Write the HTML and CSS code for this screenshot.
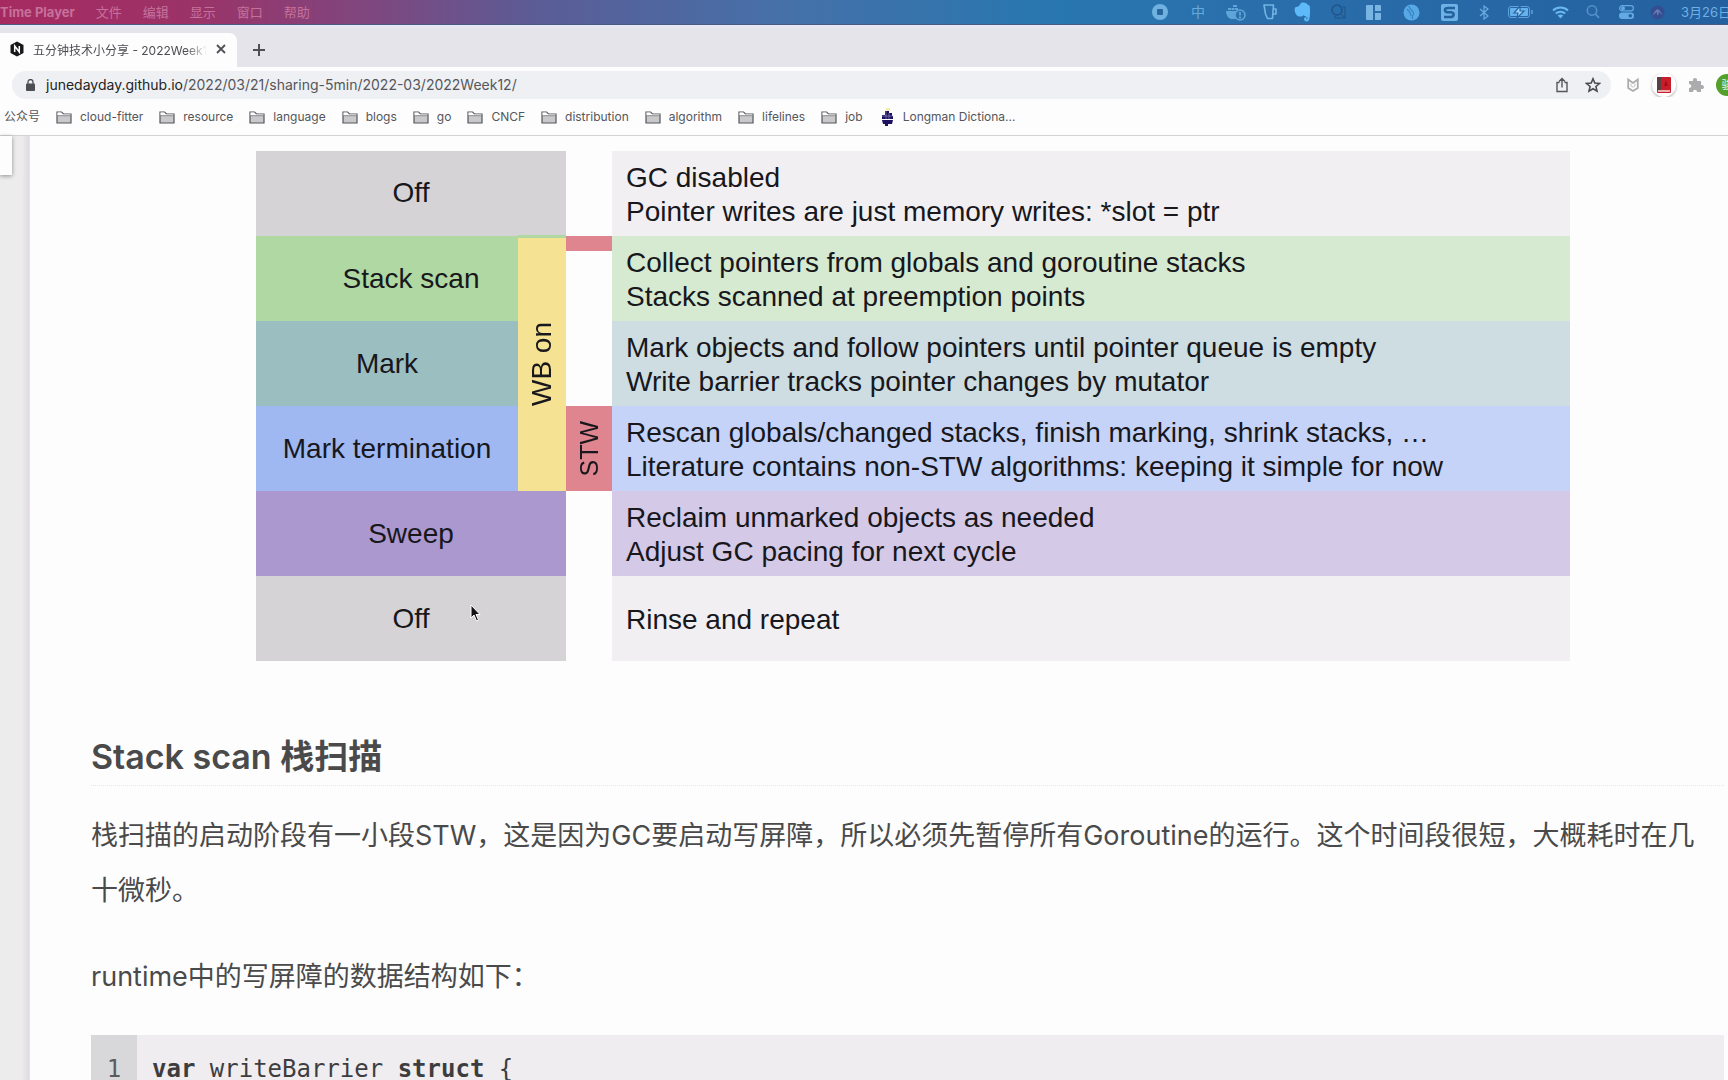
FILE: index.html
```html
<!DOCTYPE html>
<html lang="zh-CN">
<head>
<meta charset="utf-8">
<title>五分钟技术小分享 - 2022Week12</title>
<link rel="stylesheet" href="styles.css">
</head>
<body>
<svg class="defs" aria-hidden="true">
  <symbol id="folder" viewBox="0 0 16 14"><path d="M1 12.5V1.5H5.5L7.5 3.5H15V12.5Z" fill="#c9c9cb" stroke="#55565a" stroke-width="1.2"/><path d="M1.5 2H5.2L7 4H14.5V5H1.5Z" fill="#fff"/><path d="M1 5.2H15" stroke="#77787c" stroke-width=".8"/></symbol>
</svg>

<header class="menubar">
  <nav class="menus">
    <b>Time Player</b><span>文件</span><span>编辑</span><span>显示</span><span>窗口</span><span>帮助</span>
  </nav>
  <div class="status">
    <svg width="16" height="16" viewBox="0 0 16 16"><circle cx="8" cy="8" r="8" fill="#6fb2e0"/><rect x="5" y="5" width="6" height="6" rx="1" fill="#28659c"/></svg>
    <span class="ime">中</span>
    <svg width="20" height="18" viewBox="0 0 20 18"><path d="M0 8h11a6 6 0 0 0-1 8H5C2 15 0 12 0 8ZM2 5h3v2H2ZM5.500 5h3v2h-3ZM9 5h3v2H9ZM7 2h4v2H7Z" fill="#5fa5d8"/><circle cx="14" cy="12" r="5" fill="#2b70ab" stroke="#5fa5d8" stroke-width="1.500"/><path d="M14 9v3.500M13 14.500h2" stroke="#5fa5d8" stroke-width="1.800"/></svg>
    <svg width="16" height="18" viewBox="0 0 16 18"><path d="M2 2h9.500l-1 13.500H5.500L3.500 11ZM11 6h3v5h-3.500" fill="none" stroke="#72b5e4" stroke-width="1.600" stroke-linejoin="round"/></svg>
    <svg width="18" height="21" viewBox="0 0 18 21"><path d="M5 4 7 1c3-1 6 0 7 2 2 0 2 2 2 5 0 4 0 7-1 10-.6 2-5 2-5-1 0-2 3-2.500 3-1l-1 1c1 1 1.500 0 1.500-1 0-2-3-1-4-3-1 2-5 2-7 0C1 11 0 8 1 5.500Z" fill="#5db9f8"/></svg>
    <svg width="16" height="16" viewBox="0 0 16 16"><circle cx="7" cy="6" r="5" fill="none" stroke="#215487" stroke-width="1.500"/><path d="M11 10l4 4M13 3h2v11H5v-2" fill="none" stroke="#215487"/></svg>
    <svg width="15" height="15" viewBox="0 0 15 15"><path d="M0 1q0-1 1-1h6v15H1q-1 0-1-1ZM9 0h5q1 0 1 1v5H9ZM9 8h6v6q0 1-1 1H9Z" fill="#78b5e2"/></svg>
    <svg width="17" height="17" viewBox="0 0 17 17"><circle cx="8.500" cy="8.500" r="8" fill="#57a9e6"/><path d="M6 2c0 4 5 4 4.500 8-.5 2-2 2-1 5M4 5c2 2 4 4 4 7" fill="none" stroke="#3a82c2" stroke-width="1.200"/></svg>
    <svg width="17" height="17" viewBox="0 0 17 17"><rect width="17" height="17" rx="2" fill="#6db2e4"/><path d="M14 4H7C3 4 3 8.200 6.500 8.200H10C14 8.500 13 13 9.500 13H3" fill="none" stroke="#25619e" stroke-width="2.600"/></svg>
    <svg width="10" height="15" viewBox="0 0 10 15"><path d="M1 4l8 7-4 3V1l4 3-8 7" fill="none" stroke="#69ace0" stroke-width="1.200"/></svg>
    <svg width="25" height="12" viewBox="0 0 25 12"><rect x=".5" y=".5" width="21" height="11" rx="2.500" fill="none" stroke="#5ba2da"/><rect x="2" y="2" width="18" height="8" rx="1" fill="#65b1ec"/><path d="M12 0 6 7h4l-1 5 7-7h-4Z" fill="#9bd5ff" stroke="#2763a0" stroke-width="1.200"/><path d="M24 4v4" stroke="#5ba2da" stroke-width="1.500"/></svg>
    <svg width="17" height="13" viewBox="0 0 17 13"><path d="M1 4.500a11 11 0 0 1 15 0M3.800 7.500a7 7 0 0 1 9.400 0" fill="none" stroke="#69b8f2" stroke-width="2"/><path d="M5.700 9.500q2.800-2 5.600 0L8.500 12.500Z" fill="#69b8f2"/></svg>
    <svg width="14" height="14" viewBox="0 0 14 14"><circle cx="6" cy="5.500" r="4.700" fill="none" stroke="#5593c9" stroke-width="1.500"/><path d="M9.500 9l3.500 3.800" stroke="#5593c9" stroke-width="1.800"/></svg>
    <svg width="15" height="14" viewBox="0 0 15 14"><rect x=".6" y=".6" width="13.800" height="5.200" rx="2.600" fill="none" stroke="#63aae5" stroke-width="1.200"/><circle cx="4" cy="3.200" r="2" fill="#63aae5"/><rect y="7.500" width="15" height="6.500" rx="3.200" fill="#63aae5"/><circle cx="11.300" cy="10.800" r="1.800" fill="#2562a0"/></svg>
    <svg width="15" height="15" viewBox="0 0 15 15"><circle cx="7.500" cy="7.500" r="7" fill="#334f91"/><path d="M2 10.500l3.500-5 2-1.500 2 1.500 3.500 5-3-2.500-1.500-1v3h-1.500V7L5 8.500Z" fill="#6d79b0"/></svg>
  </div>
  <time class="date">3月26日</time>
</header>

<div class="tabstrip">
  <div class="tab">
    <svg width="14" height="16" viewBox="0 0 14 16"><path d="M7 .5 13.500 4v8L7 15.500.5 12V4Z" fill="#17181a"/><path d="M4.700 11V5l4.600 6V5" fill="none" stroke="#fff" stroke-width="1.500"/></svg>
    <span class="tab-title">五分钟技术小分享 - 2022Week12</span>
    <button class="plain" aria-label="关闭标签页"><svg width="10" height="10" viewBox="0 0 10 10"><path d="M1 1l8 8M9 1L1 9" stroke="#4f5054" stroke-width="1.800"/></svg></button>
  </div>
  <button class="plain newtab" aria-label="新标签页"><svg width="12" height="12" viewBox="0 0 12 12"><path d="M6 0v12M0 6h12" stroke="#4f5054" stroke-width="2"/></svg></button>
</div>

<div class="toolbar">
  <div class="omnibox">
    <svg width="9" height="12" viewBox="0 0 9 12"><rect y="4.500" width="9" height="7.500" rx="1" fill="#4d4e53"/><path d="M2 5V3a2.500 2.500 0 0 1 5 0v2" fill="none" stroke="#4d4e53" stroke-width="1.300"/></svg>
    <a class="url" href="#"><span>junedayday.github.io</span>/2022/03/21/sharing-5min/2022-03/2022Week12/</a>
    <button class="plain" aria-label="分享"><svg width="14" height="16" viewBox="0 0 14 16"><path d="M4.500 5.500H2v9h10v-9H9.500M7 10.500V2M4 4.500l3-3 3 3" fill="none" stroke="#55565b" stroke-width="1.400"/></svg></button>
    <button class="plain" aria-label="收藏"><svg width="16" height="16" viewBox="0 0 16 16"><path d="M8 1.800l1.800 4.300 4.700.4-3.600 3 1.100 4.600L8 11.700l-4 2.400 1.100-4.600-3.600-3 4.700-.4Z" fill="none" stroke="#4a4b50" stroke-width="1.600"/></svg></button>
  </div>
  <div class="extensions">
    <svg width="14" height="16" viewBox="0 0 14 16"><path d="M2.200 11V2.500L7 6l4.800-3.500V11L7 14Z" fill="none" stroke="#acacaf" stroke-width="1.800"/><path d="M5 6.500V9l2 1.200L9 9V6.500" fill="none" stroke="#c6c6c8"/></svg>
    <span class="ext-circle"><svg width="14" height="16" viewBox="0 0 14 16"><rect width="14" height="16" rx="1" fill="#c91d29"/><path d="M0 0h4v13H0Z" fill="#5b4146"/><path d="M1 14h12" stroke="#fff" stroke-width="1.300"/><path d="M7 9l2-6 2 6" fill="#a60e1d"/></svg></span>
    <svg width="16" height="16" viewBox="0 0 16 16"><path d="M1 4h4c-1-4 5-4 4 0h4v4c4-1 4 5 0 4v3H9c0-3-4-3-4 0H1v-4c3 0 3-4 0-4Z" fill="#acacaf"/></svg>
    <span class="avatar">骏</span>
  </div>
</div>

<nav class="bookmarks">
  <a href="#">公众号</a>
  <a href="#"><svg><use href="#folder"/></svg>cloud-fitter</a>
  <a href="#"><svg><use href="#folder"/></svg>resource</a>
  <a href="#"><svg><use href="#folder"/></svg>language</a>
  <a href="#"><svg><use href="#folder"/></svg>blogs</a>
  <a href="#"><svg><use href="#folder"/></svg>go</a>
  <a href="#"><svg><use href="#folder"/></svg>CNCF</a>
  <a href="#"><svg><use href="#folder"/></svg>distribution</a>
  <a href="#"><svg><use href="#folder"/></svg>algorithm</a>
  <a href="#"><svg><use href="#folder"/></svg>lifelines</a>
  <a href="#"><svg><use href="#folder"/></svg>job</a>
  <a href="#"><svg class="ship" viewBox="0 0 16 18"><path d="M7 0h4v3H7Z" fill="#f6edb0"/><path d="M6 3h4v2h3v3h1v3H3V7h3ZM3 12h11l-1 4H9v2H6v-2H4Z" fill="#1d1260"/><path d="M3 8h11M7 3v8M10 5v6" stroke="#8a84bd" stroke-width=".7"/></svg>Longman Dictiona...</a>
</nav>

<main class="page">
  <aside class="sidebar"><div class="sidebar-card"></div></aside>
  <article class="post">
    <table class="phases">
      <colgroup><col class="c-name"><col class="c-wb"><col class="c-stw"><col></colgroup>
      <tr class="off"><th colspan="2">Off</th><td></td><td class="desc">GC disabled<br>Pointer writes are just memory writes: *slot = ptr</td></tr>
      <tr class="scan"><th class="offset">Stack scan</th><td class="wb" rowspan="3"><span>WB on</span></td><td class="pause"><div></div></td><td class="desc">Collect pointers from globals and goroutine stacks<br>Stacks scanned at preemption points</td></tr>
      <tr class="mark"><th>Mark</th><td></td><td class="desc">Mark objects and follow pointers until pointer queue is empty<br>Write barrier tracks pointer changes by mutator</td></tr>
      <tr class="term"><th>Mark termination</th><td class="stw"><span>STW</span></td><td class="desc">Rescan globals/changed stacks, finish marking, shrink stacks, …<br>Literature contains non-STW algorithms: keeping it simple for now</td></tr>
      <tr class="sweep"><th colspan="2">Sweep</th><td></td><td class="desc">Reclaim unmarked objects as needed<br>Adjust GC pacing for next cycle</td></tr>
      <tr class="off"><th colspan="2">Off</th><td></td><td class="desc">Rinse and repeat</td></tr>
    </table>
    <h3>Stack scan 栈扫描</h3>
    <p>栈扫描的启动阶段有一小段STW，这是因为GC要启动写屏障，所以必须先暂停所有Goroutine的运行。这个时间段很短，大概耗时在几十微秒。</p>
    <p>runtime中的写屏障的数据结构如下：</p>
    <div class="code"><pre class="gutter">1</pre><pre><b>var</b> writeBarrier <b>struct</b> {</pre></div>
  </article>
</main>
<svg class="pointer" width="13" height="19" viewBox="0 0 13 19"><path d="M1 1v13l3-3 2.500 6 2-1-2.500-5.500h4Z" fill="#111" stroke="#fff"/></svg>
</body>
</html>
```
FILE: styles.css
```css
* { box-sizing: border-box; }
body {
  margin: 0;
  height: 100vh;
  display: flex;
  flex-direction: column;
  overflow: hidden;
  background: #fdfdfe;
  color: #4a4a4a;
  font-family: Inter, "Noto Sans CJK SC", sans-serif;
}
.defs { display: none; }
svg { flex: none; display: block; }
a { color: inherit; text-decoration: none; }
.plain { border: 0; padding: 0; background: none; }

.menubar {
  flex: none;
  height: 25px;
  display: flex;
  align-items: center;
  background: linear-gradient(90deg, #a62a60 0, #9b3368 11%, #7d4880 22%, #5b5c96 31%, #4670a8 45%, #2877b0 61%, #2a6fac 72%, #24609f 100%);
  border-bottom: 1px solid #4b5b86;
  font-size: 13px;
}
.menus { display: flex; gap: 21px; color: #c6719b; }
.menus b { font-size: 13px; line-height: 20px; }
.status {
  margin-left: auto;
  display: grid;
  grid-template-columns: 38px 38px 38px 30px 36px 34px 36px 40px 36px 34px 38px 42px 24px 42px 20px;
  align-items: center;
  justify-items: center;
}
.ime { color: #67a9da; font-size: 14px; line-height: 20px; }
.date {
  width: 61px;
  padding-left: 14px;
  overflow: hidden;
  white-space: nowrap;
  color: #6fb0e4;
  font-size: 13px;
  line-height: 20px;
}

.tabstrip {
  flex: none;
  height: 42px;
  padding-top: 8px;
  display: flex;
  background: linear-gradient(#e5eaf6 0, #e5e4ea 4px);
}
.tab {
  width: 237px;
  padding: 0 11px 2px 10px;
  display: flex;
  align-items: center;
  gap: 9px;
  background: #fdfdfe;
  border-radius: 0 8px 0 0;
}
.tab-title {
  flex: 1;
  overflow: hidden;
  white-space: nowrap;
  font-size: 12px;
  color: #4c4d51;
  -webkit-mask-image: linear-gradient(90deg, #000 88%, transparent);
  mask-image: linear-gradient(90deg, #000 88%, transparent);
}
.newtab { margin-left: 16px; }

.toolbar {
  flex: none;
  height: 36px;
  padding-left: 12px;
  display: flex;
  align-items: center;
}
.omnibox {
  flex: 1;
  height: 28px;
  padding: 0 10px 0 14px;
  display: flex;
  align-items: center;
  gap: 16px;
  background: #eef0f3;
  border-radius: 14px;
}
.url {
  flex: 1;
  margin-left: -5px;
  font-size: 14px;
  line-height: 20px;
  color: #55575c;
}
.url span { color: #222326; }
.extensions {
  width: 117px;
  padding-left: 15px;
  display: flex;
  align-items: center;
  gap: 12px;
  overflow: hidden;
}
.ext-circle {
  flex: none;
  width: 24px;
  height: 24px;
  display: grid;
  place-items: center;
  border-radius: 50%;
  background: #fff;
  box-shadow: 0 1px 3px #0005;
}
.avatar {
  flex: none;
  width: 22px;
  height: 22px;
  border-radius: 50%;
  background: #559f2c;
  color: #e9f5df;
  font-size: 11px;
  line-height: 22px;
  text-align: center;
}

.bookmarks {
  flex: none;
  height: 33px;
  padding: 0 0 4px 4px;
  display: flex;
  align-items: center;
  gap: 16px;
  border-bottom: 1px solid #d3d3d6;
  font-size: 12px;
  line-height: 18px;
  color: #55565a;
}
.bookmarks a { display: flex; align-items: center; gap: 8px; white-space: nowrap; }
.bookmarks svg { width: 16px; height: 15px; }
.bookmarks .ship { height: 18px; }

.page { flex: 1; min-height: 0; display: flex; }
.sidebar { flex: none; width: 29px; background: linear-gradient(90deg, #ececec 75%, #e0dce2); }
.sidebar-card { width: 12px; height: 39px; background: #fdfdfe; box-shadow: 0 1px 4px #0006; }
.post { flex: 1; padding: 15px 4px 0 61px; border-left: 1px solid #e4e2e6; min-width: 0; overflow: hidden; }

.phases {
  width: calc(100% - 319px);
  margin: 0 0 74px 165px;
  table-layout: fixed;
  border-collapse: collapse;
  font: 28px/34px "Liberation Sans", Arial, sans-serif;
  color: #17171c;
}
.c-name { width: 262px; }
.c-wb { width: 48px; }
.c-stw { width: 46px; }
.phases tr { height: 85px; }
.phases th { padding: 1px 0 0; font-weight: 400; }
.phases td { padding: 0; }
.phases th.offset { padding-left: 48px; white-space: nowrap; }
.phases td.desc { padding: 2px 0 0 14px; white-space: nowrap; }
.off th { background: #d5d3d6; }
.off .desc { background: #f1eff2; }
.scan th { background: #afd8a2; }
.scan .desc { background: #d6e9d1; }
.mark th { background: #9bbec0; }
.mark .desc { background: #cddde1; }
.term th { background: #9fb8f2; }
.term .desc { background: #c5d3f8; }
.sweep th { background: #ab98cf; }
.sweep .desc { background: #d4c9e6; }
.phases .wb { background: #f6e293; border-top: 3px solid #afd8a2; text-align: center; }
.phases .stw { background: #de858f; font-size: 25px; text-align: center; }
.wb span, .stw span { display: inline-block; vertical-align: middle; writing-mode: vertical-rl; transform: rotate(180deg); }
.phases .pause { vertical-align: top; }
.pause div { height: 15px; background: #de858f; }

h3 {
  margin: 0 0 22px;
  padding-bottom: 6px;
  border-bottom: 1px dotted #e6e6ea;
  font-size: 34px;
  line-height: 44px;
  font-weight: 600;
}
p {
  margin: 0 0 31px;
  padding-right: 16px;
  font-size: 27px;
  line-height: 55px;
}
.code { display: flex; height: 140px; background: #efedf0; }
.code pre {
  margin: 0;
  padding: 17px 15px;
  font: 24px/34px "DejaVu Sans Mono", monospace;
  color: #3d3d40;
}
.code .gutter { width: 46px; padding: 17px 0; background: #d8d7da; text-align: center; color: #5b5b5e; }
.pointer { position: absolute; left: 470px; top: 604px; }
```
